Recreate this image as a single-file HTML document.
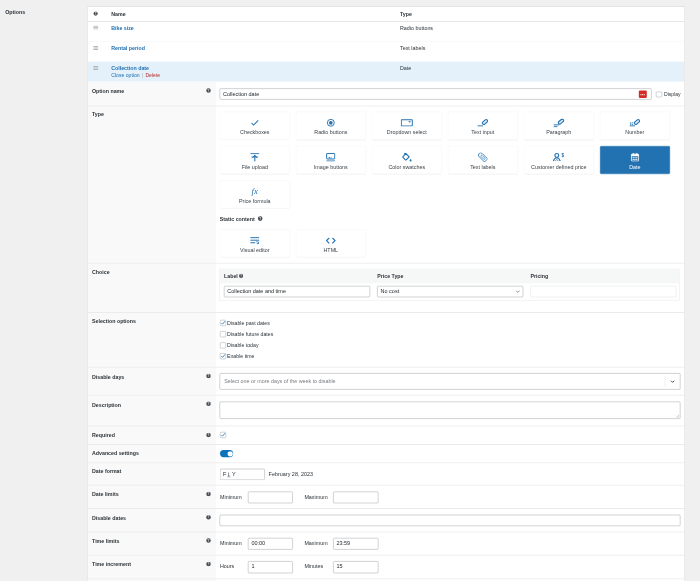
<!DOCTYPE html>
<html lang="en"><head><meta charset="utf-8"><title>Options</title>
<style>
html,body{margin:0;padding:0;background:#f0f0f1;overflow:hidden}
body{width:700px;height:581px;position:relative}
#root{position:absolute;left:0;top:0;width:1750px;height:1453px;transform:scale(0.4);transform-origin:0 0;overflow:hidden;filter:contrast(1.0001);
 font-family:"Liberation Sans",Arial,sans-serif;font-size:13px;line-height:18px;color:#2c3338}
#root div,.abs{position:absolute}
.t{white-space:nowrap;line-height:18px}
.t span{position:static}
.b{font-weight:700;color:#2c3338;font-size:13.200px}
.link{color:#2271b1}
.tile .ic{left:0;width:100%;height:0;display:flex;align-items:center;justify-content:center}
.tile .ic svg{display:block;flex:none}
</style></head><body><div id="root">
<div class="abs" style="left:218.5px;top:16px;width:1492.5px;height:1444px;background:#fff;border:1px solid #d6d6d8;border-top-color:#c3c4c7;box-sizing:border-box;"></div>
<div class="t b" style="left:13px;top:22px;">Options</div>
<div class="abs" style="left:219.5px;top:52.5px;width:1490.5px;height:1px;background:#c3c4c7"></div>
<svg class="abs" viewBox="0 0 20 20" style="left:232.5px;top:28.0px;width:12px;height:12px"><circle cx="10" cy="10" r="9" fill="#4a5057"/><text x="10" y="14.500" text-anchor="middle" font-size="12" font-weight="700" fill="#e2e4e7" font-family="Liberation Sans, sans-serif">?</text></svg>
<div class="t b" style="left:278px;top:27px;">Name</div>
<div class="t b" style="left:1000px;top:27px;">Type</div>
<svg class="abs" viewBox="0 0 13 10" style="left:232.5px;top:64px;width:13px;height:10px"><path d="M0 1.200h13M0 5h13M0 8.800h13" stroke="#adb0b3" stroke-width="2.300" fill="none"/></svg>
<div class="t b link" style="left:278px;top:62px;">Bike size</div>
<div class="t " style="left:1000px;top:62px;font-size:13.400px">Radio buttons</div>
<div class="abs" style="left:219.5px;top:103px;width:1490.5px;height:1px;background:#f0f0f1"></div>
<svg class="abs" viewBox="0 0 13 10" style="left:232.5px;top:114.6px;width:13px;height:10px"><path d="M0 1.200h13M0 5h13M0 8.800h13" stroke="#adb0b3" stroke-width="2.300" fill="none"/></svg>
<div class="t b link" style="left:278px;top:112px;">Rental period</div>
<div class="t " style="left:1000px;top:112px;font-size:13.400px">Text labels</div>
<div class="abs" style="left:219.5px;top:153.5px;width:1490.5px;height:50.5px;background:#e5f1fa"></div>
<svg class="abs" viewBox="0 0 13 10" style="left:232.5px;top:165.2px;width:13px;height:10px"><path d="M0 1.200h13M0 5h13M0 8.800h13" stroke="#adb0b3" stroke-width="2.300" fill="none"/></svg>
<div class="t b link" style="left:278px;top:162px;">Collection date</div>
<div class="t " style="left:1000px;top:162px;font-size:13.400px">Date</div>
<div class="t " style="left:278px;top:180px;font-size:12.800px"><span style="color:#2271b1">Close option</span><span style="color:#a7aaad;margin:0 5px 0 6px">|</span><span style="color:#b32d2e">Delete</span></div>
<div class="abs" style="left:219.5px;top:204px;width:319.5px;height:1256px;background:#f9f9f9"></div>
<div class="t b" style="left:230px;top:220px;">Option name</div>
<svg class="abs" viewBox="0 0 20 20" style="left:515.25px;top:220.25px;width:12.5px;height:12.5px"><circle cx="10" cy="10" r="9" fill="#4a5057"/><text x="10" y="14.500" text-anchor="middle" font-size="12" font-weight="700" fill="#e2e4e7" font-family="Liberation Sans, sans-serif">?</text></svg>
<div class="abs" style="left:219.5px;top:264.0px;width:1490.5px;height:2px;background:#ebebeb"></div>
<div class="t b" style="left:230px;top:277px;">Type</div>
<div class="abs" style="left:219.5px;top:657.25px;width:1490.5px;height:2px;background:#ebebeb"></div>
<div class="t b" style="left:230px;top:672px;">Choice</div>
<div class="abs" style="left:219.5px;top:779.75px;width:1490.5px;height:2px;background:#ebebeb"></div>
<div class="t b" style="left:230px;top:794px;">Selection options</div>
<div class="abs" style="left:219.5px;top:916.75px;width:1490.5px;height:2px;background:#ebebeb"></div>
<div class="t b" style="left:230px;top:934px;">Disable days</div>
<svg class="abs" viewBox="0 0 20 20" style="left:515.25px;top:933.5px;width:12.5px;height:12.5px"><circle cx="10" cy="10" r="9" fill="#4a5057"/><text x="10" y="14.500" text-anchor="middle" font-size="12" font-weight="700" fill="#e2e4e7" font-family="Liberation Sans, sans-serif">?</text></svg>
<div class="abs" style="left:219.5px;top:986.5px;width:1490.5px;height:2px;background:#ebebeb"></div>
<div class="t b" style="left:230px;top:1004px;">Description</div>
<svg class="abs" viewBox="0 0 20 20" style="left:515.25px;top:1003.25px;width:12.5px;height:12.5px"><circle cx="10" cy="10" r="9" fill="#4a5057"/><text x="10" y="14.500" text-anchor="middle" font-size="12" font-weight="700" fill="#e2e4e7" font-family="Liberation Sans, sans-serif">?</text></svg>
<div class="abs" style="left:219.5px;top:1064.25px;width:1490.5px;height:2px;background:#ebebeb"></div>
<div class="t b" style="left:230px;top:1080px;">Required</div>
<svg class="abs" viewBox="0 0 20 20" style="left:515.25px;top:1081.0px;width:12.5px;height:12.5px"><circle cx="10" cy="10" r="9" fill="#4a5057"/><text x="10" y="14.500" text-anchor="middle" font-size="12" font-weight="700" fill="#e2e4e7" font-family="Liberation Sans, sans-serif">?</text></svg>
<div class="abs" style="left:219.5px;top:1110.0px;width:1490.5px;height:2px;background:#ebebeb"></div>
<div class="t b" style="left:230px;top:1124px;">Advanced settings</div>
<div class="abs" style="left:219.5px;top:1155.75px;width:1490.5px;height:2px;background:#ebebeb"></div>
<div class="t b" style="left:230px;top:1170px;">Date format</div>
<div class="abs" style="left:219.5px;top:1212.0px;width:1490.5px;height:2px;background:#ebebeb"></div>
<div class="t b" style="left:230px;top:1227px;">Date limits</div>
<svg class="abs" viewBox="0 0 20 20" style="left:515.25px;top:1228.75px;width:12.5px;height:12.5px"><circle cx="10" cy="10" r="9" fill="#4a5057"/><text x="10" y="14.500" text-anchor="middle" font-size="12" font-weight="700" fill="#e2e4e7" font-family="Liberation Sans, sans-serif">?</text></svg>
<div class="abs" style="left:219.5px;top:1270.25px;width:1490.5px;height:2px;background:#ebebeb"></div>
<div class="t b" style="left:230px;top:1287px;">Disable dates</div>
<svg class="abs" viewBox="0 0 20 20" style="left:515.25px;top:1287.0px;width:12.5px;height:12.5px"><circle cx="10" cy="10" r="9" fill="#4a5057"/><text x="10" y="14.500" text-anchor="middle" font-size="12" font-weight="700" fill="#e2e4e7" font-family="Liberation Sans, sans-serif">?</text></svg>
<div class="abs" style="left:219.5px;top:1328.5px;width:1490.5px;height:2px;background:#ebebeb"></div>
<div class="t b" style="left:230px;top:1344px;">Time limits</div>
<svg class="abs" viewBox="0 0 20 20" style="left:515.25px;top:1345.25px;width:12.5px;height:12.5px"><circle cx="10" cy="10" r="9" fill="#4a5057"/><text x="10" y="14.500" text-anchor="middle" font-size="12" font-weight="700" fill="#e2e4e7" font-family="Liberation Sans, sans-serif">?</text></svg>
<div class="abs" style="left:219.5px;top:1386.75px;width:1490.5px;height:2px;background:#ebebeb"></div>
<div class="t b" style="left:230px;top:1402px;">Time increment</div>
<svg class="abs" viewBox="0 0 20 20" style="left:515.25px;top:1403.5px;width:12.5px;height:12.5px"><circle cx="10" cy="10" r="9" fill="#4a5057"/><text x="10" y="14.500" text-anchor="middle" font-size="12" font-weight="700" fill="#e2e4e7" font-family="Liberation Sans, sans-serif">?</text></svg>
<div class="abs" style="left:219.5px;top:1445.5px;width:1490.5px;height:2px;background:#ebebeb"></div>
<div class="abs" style="left:549px;top:221px;width:1080px;height:28px;background:#fff;border:1px solid #8c8f94;border-radius:3px;box-sizing:border-box;"></div>
<div class="t " style="left:557.5px;top:227px;color:#1d2327;font-size:13.700px">Collection date</div>
<div class="abs" style="left:1596.5px;top:226px;width:20px;height:19px;background:#d32d27;border-radius:3px"></div>
<div class="abs" style="left:1601.0px;top:235px;width:2.6px;height:2.6px;background:#fff;border-radius:50%;opacity:.85"></div>
<div class="abs" style="left:1605.2px;top:235px;width:2.6px;height:2.6px;background:#fff;border-radius:50%;opacity:.85"></div>
<div class="abs" style="left:1609.4px;top:235px;width:2.6px;height:2.6px;background:#fff;border-radius:50%;opacity:.85"></div>
<div class="abs" style="left:1640px;top:228.5px;width:14.5px;height:14.5px;background:#fff;border:1px solid #8c8f94;border-radius:3px;box-sizing:border-box"></div>
<div class="t " style="left:1660px;top:227px;font-size:12.700px">Display</div>
<div class="abs tile" style="left:549.5px;top:279px;width:175px;height:70px;background:#fff;border:1px solid #f3f3f3;color:#2271b1;box-sizing:border-box;border-radius:3px;box-shadow:0 1px 2px rgba(0,0,0,.03);"><div class="ic" style="top:27px"><svg viewBox="0 0 24 24" width="24" height="24" fill="currentColor"><path d="M9 16.17L4.83 12l-1.42 1.41L9 19 21 7l-1.41-1.41z" stroke="currentColor" stroke-width="0.800"/></svg></div></div>
<div class="t " style="left:519.5px;top:322px;width:235px;text-align:center;color:#3c434a;font-size:13.400px">Checkboxes</div>
<div class="abs tile" style="left:739.5px;top:279px;width:175px;height:70px;background:#fff;border:1px solid #f3f3f3;color:#2271b1;box-sizing:border-box;border-radius:3px;box-shadow:0 1px 2px rgba(0,0,0,.03);"><div class="ic" style="top:27px"><svg viewBox="0 0 24 24" width="24" height="24" fill="currentColor"><circle cx="12" cy="12" r="8.600" fill="none" stroke="currentColor" stroke-width="2.400"/><circle cx="12" cy="12" r="4.6"/></svg></div></div>
<div class="t " style="left:709.5px;top:322px;width:235px;text-align:center;color:#3c434a;font-size:13.400px">Radio buttons</div>
<div class="abs tile" style="left:929.5px;top:279px;width:175px;height:70px;background:#fff;border:1px solid #f3f3f3;color:#2271b1;box-sizing:border-box;border-radius:3px;box-shadow:0 1px 2px rgba(0,0,0,.03);"><div class="ic" style="top:27px"><svg viewBox="0 0 30 18" width="30" height="18" fill="currentColor"><rect x="1" y="1" width="28" height="16" rx="2" fill="none" stroke="currentColor" stroke-width="2.900"/><path d="M18.500 5h7l-3.500 4z"/></svg></div></div>
<div class="t " style="left:899.5px;top:322px;width:235px;text-align:center;color:#3c434a;font-size:13.400px">Dropdown select</div>
<div class="abs tile" style="left:1119.5px;top:279px;width:175px;height:70px;background:#fff;border:1px solid #f3f3f3;color:#2271b1;box-sizing:border-box;border-radius:3px;box-shadow:0 1px 2px rgba(0,0,0,.03);"><div class="ic" style="top:27px"><svg viewBox="0 0 28 20" width="28" height="20" fill="currentColor"><g fill="#d6e6f4" stroke="currentColor" stroke-width="2.700" stroke-linejoin="round"><rect x="-3.600" y="-7.500" width="7.200" height="15" rx="3.600" transform="translate(19.500 8) rotate(50)"/></g><rect x="1" y="16.500" width="13.500" height="2.500"/></svg></div></div>
<div class="t " style="left:1089.5px;top:322px;width:235px;text-align:center;color:#3c434a;font-size:13.400px">Text input</div>
<div class="abs tile" style="left:1309.5px;top:279px;width:175px;height:70px;background:#fff;border:1px solid #f3f3f3;color:#2271b1;box-sizing:border-box;border-radius:3px;box-shadow:0 1px 2px rgba(0,0,0,.03);"><div class="ic" style="top:27px"><svg viewBox="0 0 28 23" width="28" height="23" fill="currentColor"><g fill="#d6e6f4" stroke="currentColor" stroke-width="2.700" stroke-linejoin="round"><rect x="-3.600" y="-7.500" width="7.200" height="15" rx="3.600" transform="translate(19.500 8) rotate(50)"/></g><rect x="1" y="15" width="14" height="2.400"/><rect x="1" y="19.600" width="9.500" height="2.400"/></svg></div></div>
<div class="t " style="left:1279.5px;top:322px;width:235px;text-align:center;color:#3c434a;font-size:13.400px">Paragraph</div>
<div class="abs tile" style="left:1499.5px;top:279px;width:175px;height:70px;background:#fff;border:1px solid #f3f3f3;color:#2271b1;box-sizing:border-box;border-radius:3px;box-shadow:0 1px 2px rgba(0,0,0,.03);"><div class="ic" style="top:27px"><svg viewBox="0 0 28 20" width="28" height="20" fill="currentColor"><g fill="#d6e6f4" stroke="currentColor" stroke-width="2.700" stroke-linejoin="round"><rect x="-3.600" y="-7.500" width="7.200" height="15" rx="3.600" transform="translate(19.500 8) rotate(50)"/></g><rect x="1" y="16.500" width="13.500" height="2.500"/><rect x="2" y="9" width="2" height="6"/><rect x="6" y="9" width="4" height="2"/><rect x="6" y="13" width="4" height="2"/></svg></div></div>
<div class="t " style="left:1469.5px;top:322px;width:235px;text-align:center;color:#3c434a;font-size:13.400px">Number</div>
<div class="abs tile" style="left:549.5px;top:365px;width:175px;height:70px;background:#fff;border:1px solid #f3f3f3;color:#2271b1;box-sizing:border-box;border-radius:3px;box-shadow:0 1px 2px rgba(0,0,0,.03);"><div class="ic" style="top:27px"><svg viewBox="0 0 22 20" width="24" height="21.5" fill="currentColor"><rect x="1" y="1" width="20" height="2"/><rect x="3" y="9" width="16" height="1.6"/><path d="M10 20V8.5L6.2 12.2 4.9 10.9 11 4.8l6.100 6.100-1.300 1.300L12 8.500V20z" stroke="currentColor" stroke-width=".5"/></svg></div></div>
<div class="t " style="left:519.5px;top:410px;width:235px;text-align:center;color:#3c434a;font-size:13.400px">File upload</div>
<div class="abs tile" style="left:739.5px;top:365px;width:175px;height:70px;background:#fff;border:1px solid #f3f3f3;color:#2271b1;box-sizing:border-box;border-radius:3px;box-shadow:0 1px 2px rgba(0,0,0,.03);"><div class="ic" style="top:27px"><svg viewBox="0 0 22 21" width="23.5" height="22.5" fill="currentColor"><rect x="1.500" y="1.500" width="19" height="13" rx="1" fill="none" stroke="currentColor" stroke-width="2.300"/><path d="M4.500 12.500l3.500-3.500 2.500 2.500 1.500-1 2.500 2z" opacity=".85"/><rect x="1" y="18" width="20" height="2.300"/></svg></div></div>
<div class="t " style="left:709.5px;top:410px;width:235px;text-align:center;color:#3c434a;font-size:13.400px">Image buttons</div>
<div class="abs tile" style="left:929.5px;top:365px;width:175px;height:70px;background:#fff;border:1px solid #f3f3f3;color:#2271b1;box-sizing:border-box;border-radius:3px;box-shadow:0 1px 2px rgba(0,0,0,.03);"><div class="ic" style="top:27px"><svg viewBox="0 0 25 24" width="25" height="24" fill="currentColor"><g fill="none" stroke="currentColor" stroke-width="2" stroke-linejoin="round"><path d="M9.500 2.500l8.500 8.500-7.500 7.500a1.500 1.500 0 0 1-2 0l-6-6a1.500 1.500 0 0 1 0-2z" stroke-width="2.800"/><path d="M6 1l5 5" stroke-width="2.800"/></g><path d="M21.500 16s-2.500 2.800-2.500 4.500a2.500 2.500 0 0 0 5 0c0-1.700-2.500-4.500-2.500-4.500z"/></svg></div></div>
<div class="t " style="left:899.5px;top:410px;width:235px;text-align:center;color:#3c434a;font-size:13.400px">Color swatches</div>
<div class="abs tile" style="left:1119.5px;top:365px;width:175px;height:70px;background:#fff;border:1px solid #f3f3f3;color:#2271b1;box-sizing:border-box;border-radius:3px;box-shadow:0 1px 2px rgba(0,0,0,.03);"><div class="ic" style="top:27px"><svg viewBox="0 0 24 24" width="24" height="24" fill="currentColor"><g fill="none" stroke="currentColor" stroke-width="2" stroke-linejoin="round" transform="translate(12 12) rotate(-45)"><path d="M-5.500 -11.500h11v19a5.500 5.500 0 0 1-11 0z" transform="rotate(180)"/><rect x="-2" y="-6" width="4" height="13" rx="2" stroke-width="1.600"/></g></svg></div></div>
<div class="t " style="left:1089.5px;top:410px;width:235px;text-align:center;color:#3c434a;font-size:13.400px">Text labels</div>
<div class="abs tile" style="left:1309.5px;top:365px;width:175px;height:70px;background:#fff;border:1px solid #f3f3f3;color:#2271b1;box-sizing:border-box;border-radius:3px;box-shadow:0 1px 2px rgba(0,0,0,.03);"><div class="ic" style="top:27px"><svg viewBox="0 0 30 22" width="30" height="22" fill="currentColor"><g fill="none" stroke="currentColor" stroke-width="2.800"><circle cx="10" cy="6.500" r="4.800"/><path d="M1.500 21c1.500-5.500 4-8.500 8.500-8.500s7 3 8.500 8.500"/><path d="M6.500 21c.8-2.500 1.800-4 3.500-4s2.700 1.500 3.500 4" stroke-width="1.800"/></g><text x="25" y="11" font-size="12" font-weight="700" text-anchor="middle" font-family="Liberation Sans, sans-serif">$</text></svg></div></div>
<div class="t " style="left:1279.5px;top:410px;width:235px;text-align:center;color:#3c434a;font-size:13.400px">Customer defined price</div>
<div class="abs tile" style="left:1499.5px;top:365px;width:175px;height:70px;background:#2271b1;border:1px solid #2271b1;color:#fff;box-sizing:border-box;border-radius:3px;box-shadow:0 1px 2px rgba(0,0,0,.03);"><div class="ic" style="top:27px"><svg viewBox="0 0 20 21" width="21" height="22" fill="currentColor"><rect x="1.200" y="3.200" width="17.600" height="16.600" rx="2.200" fill="none" stroke="currentColor" stroke-width="2.200"/><rect x="1.200" y="3.200" width="17.600" height="5.300" rx="1.500"/><rect x="4.600" y="0.300" width="2.400" height="4.500" rx="1"/><rect x="13" y="0.300" width="2.400" height="4.500" rx="1"/><g><rect x="4.300" y="10.600" width="2.900" height="2.500"/><rect x="8.550" y="10.600" width="2.900" height="2.500"/><rect x="12.800" y="10.600" width="2.900" height="2.500"/><rect x="4.300" y="14.600" width="2.900" height="2.500"/><rect x="8.550" y="14.600" width="2.900" height="2.500"/><rect x="12.800" y="14.600" width="2.900" height="2.500"/></g></svg></div></div>
<div class="t " style="left:1469.5px;top:410px;width:235px;text-align:center;color:#fff;font-size:13.400px">Date</div>
<div class="abs tile" style="left:549.5px;top:451px;width:175px;height:70px;background:#fff;border:1px solid #f3f3f3;color:#2271b1;box-sizing:border-box;border-radius:3px;box-shadow:0 1px 2px rgba(0,0,0,.03);"><div class="ic" style="top:27px"><span style="font-family:'Liberation Serif',serif;font-style:italic;font-size:22px;line-height:24px;letter-spacing:0px">fx</span></div></div>
<div class="t " style="left:519.5px;top:494px;width:235px;text-align:center;color:#3c434a;font-size:13.400px">Price formula</div>
<div class="t b" style="left:549.5px;top:540px;">Static content</div>
<svg class="abs" viewBox="0 0 20 20" style="left:644.0px;top:540.0px;width:13px;height:13px"><circle cx="10" cy="10" r="9" fill="#4a5057"/><text x="10" y="14.500" text-anchor="middle" font-size="12" font-weight="700" fill="#e2e4e7" font-family="Liberation Sans, sans-serif">?</text></svg>
<div class="abs tile" style="left:549.5px;top:573px;width:175px;height:70px;background:#fff;border:1px solid #f3f3f3;color:#2271b1;box-sizing:border-box;border-radius:3px;box-shadow:0 1px 2px rgba(0,0,0,.03);"><div class="ic" style="top:27px"><svg viewBox="0 0 24 19" width="24" height="19" fill="currentColor"><rect x="1" y="1" width="22" height="2.400"/><rect x="1" y="7.300" width="22" height="2.400"/><path d="M1 13.600h12v2.400H1z"/><path d="M15 11.500h4.500a3.500 3.500 0 0 1 0 7H17v-2.400h2.500a1.100 1.100 0 0 0 0-2.200H15z" opacity=".9"/></svg></div></div>
<div class="t " style="left:519.5px;top:617px;width:235px;text-align:center;color:#3c434a;font-size:13.400px">Visual editor</div>
<div class="abs tile" style="left:739.5px;top:573px;width:175px;height:70px;background:#fff;border:1px solid #f3f3f3;color:#2271b1;box-sizing:border-box;border-radius:3px;box-shadow:0 1px 2px rgba(0,0,0,.03);"><div class="ic" style="top:27px"><svg viewBox="0 0 26 17" width="26" height="17" fill="currentColor"><g fill="none" stroke="currentColor" stroke-width="3"><path d="M9 1.500L2.500 8.500 9 15.500"/><path d="M17 1.500l6.500 7-6.500 7"/></g></svg></div></div>
<div class="t " style="left:709.5px;top:617px;width:235px;text-align:center;color:#3c434a;font-size:13.400px">HTML</div>
<div class="abs" style="left:548px;top:672px;width:1152px;height:79px;background:#fff;border:1px solid #e4e4e4;box-sizing:border-box"></div>
<div class="abs" style="left:549px;top:673px;width:1150px;height:34px;background:#f6f7f7"></div>
<div class="t b" style="left:560px;top:682px;">Label</div>
<svg class="abs" viewBox="0 0 20 20" style="left:596.75px;top:684.25px;width:11.5px;height:11.5px"><circle cx="10" cy="10" r="9" fill="#4a5057"/><text x="10" y="14.500" text-anchor="middle" font-size="12" font-weight="700" fill="#e2e4e7" font-family="Liberation Sans, sans-serif">?</text></svg>
<div class="t b" style="left:943px;top:682px;">Price Type</div>
<div class="t b" style="left:1326px;top:682px;">Pricing</div>
<div class="abs" style="left:559.5px;top:714.5px;width:365px;height:28px;background:#fff;border:1px solid #8c8f94;border-radius:3px;box-sizing:border-box;"></div>
<div class="t " style="left:568.0px;top:720px;color:#1d2327;font-size:13.700px">Collection date and time</div>
<div class="abs" style="left:943px;top:714.5px;width:365px;height:28px;background:#fff;border:1px solid #8c8f94;border-radius:3px;box-sizing:border-box;"></div>
<div class="t " style="left:951.5px;top:720px;color:#1d2327;font-size:13.700px">No cost</div>
<svg class="abs" viewBox="0 0 12 8" style="left:1289px;top:725px;width:11px;height:8px"><path d="M1.500 1.500L6 6l4.500-4.500" fill="none" stroke="#50575e" stroke-width="1.800"/></svg>
<div class="abs" style="left:1326px;top:714.5px;width:365px;height:28px;background:#fff;border:1px solid #8c8f94;border-radius:3px;box-sizing:border-box;border-color:#dcdcde"></div>
<div class="abs" style="left:549.5px;top:800.0px;width:15px;height:15px;background:#fff;border:1px solid #8c8f94;border-radius:3px;box-sizing:border-box"><svg viewBox="0 0 16 16" width="16" height="16" style="position:absolute;left:-1px;top:-2px"><path d="M3.300 8.200l3 3.200L12.800 3.800" fill="none" stroke="#3582c4" stroke-width="2.300"/></svg></div>
<div class="t " style="left:567.5px;top:800px;">Disable past dates</div>
<div class="abs" style="left:549.5px;top:827.5px;width:15px;height:15px;background:#fff;border:1px solid #8c8f94;border-radius:3px;box-sizing:border-box"></div>
<div class="t " style="left:567.5px;top:827px;">Disable future dates</div>
<div class="abs" style="left:549.5px;top:855.5px;width:15px;height:15px;background:#fff;border:1px solid #8c8f94;border-radius:3px;box-sizing:border-box"></div>
<div class="t " style="left:567.5px;top:854px;">Disable today</div>
<div class="abs" style="left:549.5px;top:882.5px;width:15px;height:15px;background:#fff;border:1px solid #8c8f94;border-radius:3px;box-sizing:border-box"><svg viewBox="0 0 16 16" width="16" height="16" style="position:absolute;left:-1px;top:-2px"><path d="M3.300 8.200l3 3.200L12.800 3.800" fill="none" stroke="#3582c4" stroke-width="2.300"/></svg></div>
<div class="t " style="left:567.5px;top:882px;">Enable time</div>
<div class="abs" style="left:549px;top:933px;width:1152px;height:41px;background:#fff;border:1px solid #8c8f94;border-radius:3px;box-sizing:border-box;border-color:#8c8f94"></div>
<div class="t " style="left:560.5px;top:944px;color:#787c82;font-size:13.400px">Select one or more days of the week to disable</div>
<div class="abs" style="left:1662px;top:939px;width:1px;height:29px;background:#dcdcde"></div>
<svg class="abs" viewBox="0 0 12 8" style="left:1676px;top:950px;width:11px;height:8px"><path d="M1.500 1.500L6 6l4.500-4.500" fill="none" stroke="#2c3338" stroke-width="2.400"/></svg>
<div class="abs" style="left:549px;top:1003.5px;width:1152px;height:43px;background:#fff;border:1px solid #8c8f94;border-radius:3px;box-sizing:border-box;"></div>
<svg class="abs" viewBox="0 0 10 10" style="left:1689px;top:1035px;width:10px;height:10px"><path d="M9 2L2 9M9 6L6 9" stroke="#8c8f94" stroke-width="1.200" fill="none"/></svg>
<div class="abs" style="left:549.5px;top:1080.0px;width:15px;height:15px;background:#fff;border:1px solid #8c8f94;border-radius:3px;box-sizing:border-box"><svg viewBox="0 0 16 16" width="16" height="16" style="position:absolute;left:-1px;top:-2px"><path d="M3.300 8.200l3 3.200L12.800 3.800" fill="none" stroke="#3582c4" stroke-width="2.300"/></svg></div>
<div class="abs" style="left:549.5px;top:1125px;width:33.5px;height:18px;background:#0b73ba;border-radius:9px"></div>
<div class="abs" style="left:569px;top:1127.5px;width:13px;height:13px;background:#fff;border-radius:50%"></div>
<div class="abs" style="left:550px;top:1171.5px;width:111.5px;height:28px;background:#fff;border:1px solid #8c8f94;border-radius:3px;box-sizing:border-box;"></div>
<div class="t " style="left:557.5px;top:1177px;color:#1d2327;font-size:13.700px">F <span style="text-decoration:underline dotted #555;text-underline-offset:2px">j,</span> Y</div>
<div class="t " style="left:671.5px;top:1177px;font-size:13.600px">February 28, 2023</div>
<div class="t " style="left:550px;top:1234px;font-size:13.400px">Minimum</div>
<div class="abs" style="left:620px;top:1228.5px;width:112px;height:29.5px;background:#fff;border:1px solid #8c8f94;border-radius:3px;box-sizing:border-box;"></div>
<div class="t " style="left:761px;top:1234px;font-size:13.400px">Maximum</div>
<div class="abs" style="left:832.5px;top:1228.5px;width:113px;height:29.5px;background:#fff;border:1px solid #8c8f94;border-radius:3px;box-sizing:border-box;"></div>
<div class="abs" style="left:549px;top:1287px;width:1152px;height:28px;background:#fff;border:1px solid #8c8f94;border-radius:3px;box-sizing:border-box;"></div>
<div class="t " style="left:550px;top:1350px;font-size:13.400px">Minimum</div>
<div class="abs" style="left:620px;top:1344.5px;width:112px;height:29.5px;background:#fff;border:1px solid #8c8f94;border-radius:3px;box-sizing:border-box;"></div>
<div class="t " style="left:628.5px;top:1350px;color:#1d2327;font-size:13.700px">00:00</div>
<div class="t " style="left:761px;top:1350px;font-size:13.400px">Maximum</div>
<div class="abs" style="left:832.5px;top:1344.5px;width:113px;height:29.5px;background:#fff;border:1px solid #8c8f94;border-radius:3px;box-sizing:border-box;"></div>
<div class="t " style="left:841.0px;top:1350px;color:#1d2327;font-size:13.700px">23:59</div>
<div class="t " style="left:550px;top:1407px;font-size:13.400px">Hours</div>
<div class="abs" style="left:620px;top:1403px;width:112px;height:29.5px;background:#fff;border:1px solid #8c8f94;border-radius:3px;box-sizing:border-box;"></div>
<div class="t " style="left:628.5px;top:1407px;color:#1d2327;font-size:13.700px">1</div>
<div class="t " style="left:761px;top:1407px;font-size:13.400px">Minutes</div>
<div class="abs" style="left:832.5px;top:1403px;width:113px;height:29.5px;background:#fff;border:1px solid #8c8f94;border-radius:3px;box-sizing:border-box;"></div>
<div class="t " style="left:841.0px;top:1407px;color:#1d2327;font-size:13.700px">15</div>
</div></body></html>
